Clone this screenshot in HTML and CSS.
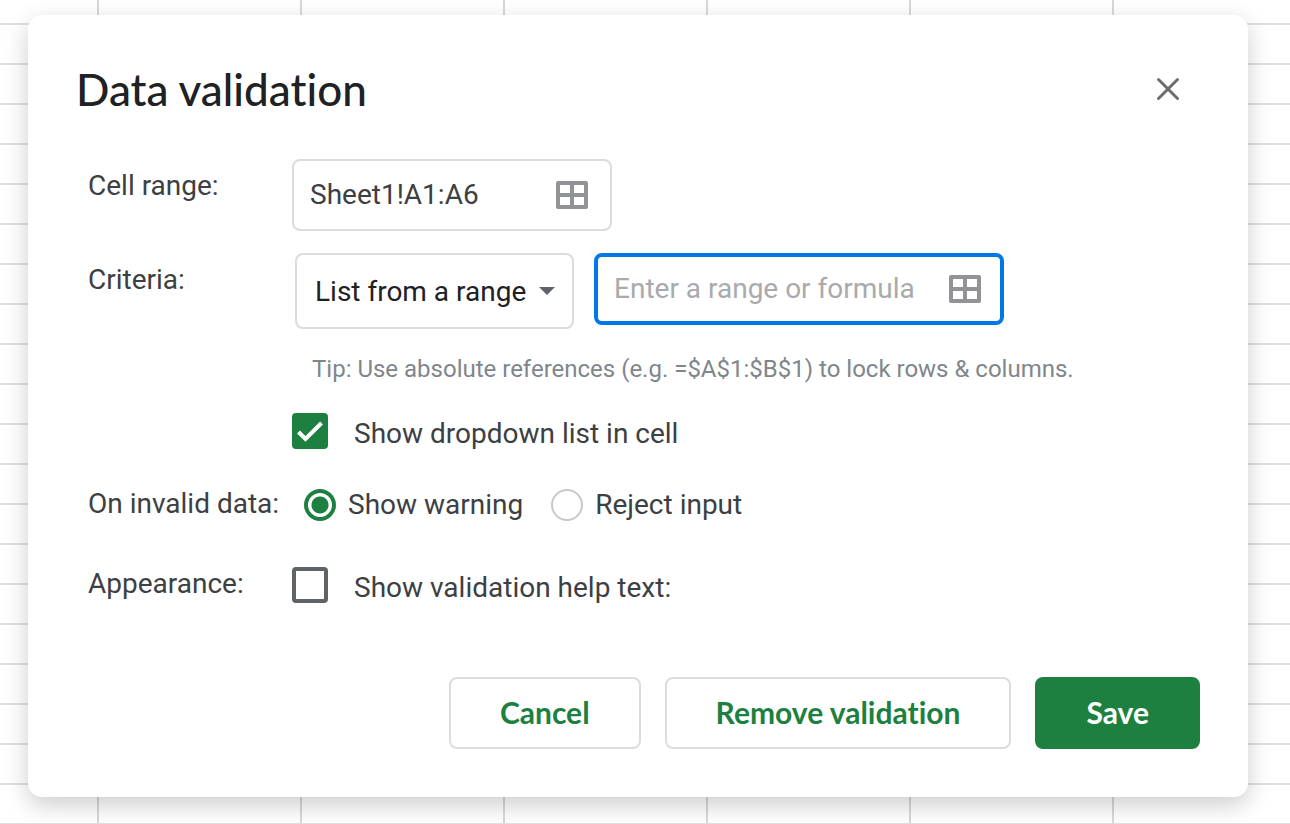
FILE: index.html
```html
<!DOCTYPE html>
<html lang="en">
<head>
    <meta charset="UTF-8">
    <meta name="viewport" content="width=device-width, initial-scale=1.0">
    <title>Data validation</title>
    <link rel="stylesheet" href="styles.css">
</head>
<body>
    <form class="dialog" role="dialog" aria-labelledby="dialog-title">
        <div class="dialog-header">
            <h1 id="dialog-title">Data validation</h1>
            <button type="button" class="close-btn" aria-label="Close">
                <svg width="24" height="24" viewBox="0 0 24 24" fill="none" stroke="#6b6e71" stroke-width="3" stroke-linecap="round">
                    <path d="M2.5 2.5L21.5 21.5M21.5 2.5L2.5 21.5"/>
                </svg>
            </button>
        </div>

        <div class="row range-row">
            <label class="row-label" for="cell-range">Cell range:</label>
            <div class="range-field">
                <input type="text" id="cell-range" value="Sheet1!A1:A6">
                <button type="button" class="grid-btn" aria-label="Select data range">
                    <svg width="32" height="28" viewBox="0 0 32 28" fill="#929396">
                        <path fill-rule="evenodd" d="M2 0H30Q32 0 32 2V26Q32 28 30 28H2Q0 28 0 26V2Q0 0 2 0ZM4 4V12H14V4ZM18 4V12H28V4ZM4 16V24H14V16ZM18 16V24H28V16Z"/>
                    </svg>
                </button>
            </div>
        </div>

        <div class="row criteria-row">
            <label class="row-label" for="criteria">Criteria:</label>
            <div class="row-content">
                <div class="criteria-fields">
                    <div class="select-wrap">
                        <select id="criteria">
                            <option>List from a range</option>
                        </select>
                        <svg class="arrow" width="16" height="8" viewBox="0 0 16 8"><path d="M0 0H16L8 8Z" fill="#5f6368"/></svg>
                    </div>
                    <div class="range-field active">
                        <input type="text" id="criteria-range" placeholder="Enter a range or formula" aria-label="Range or formula">
                        <button type="button" class="grid-btn" aria-label="Select data range">
                            <svg width="32" height="28" viewBox="0 0 32 28" fill="#929396">
                                <path fill-rule="evenodd" d="M2 0H30Q32 0 32 2V26Q32 28 30 28H2Q0 28 0 26V2Q0 0 2 0ZM4 4V12H14V4ZM18 4V12H28V4ZM4 16V24H14V16ZM18 16V24H28V16Z"/>
                            </svg>
                        </button>
                    </div>
                </div>
                <p class="tip">Tip: Use absolute references (e.g. =$A$1:$B$1) to lock rows &amp; columns.</p>
                <div class="option">
                    <input type="checkbox" id="show-dropdown" checked>
                    <label for="show-dropdown">Show dropdown list in cell</label>
                </div>
            </div>
        </div>

        <div class="row" role="radiogroup" aria-labelledby="invalid-label">
            <span class="row-label" id="invalid-label">On invalid data:</span>
            <div class="radios">
                <label class="radio"><input type="radio" name="invalid" checked>Show warning</label>
                <label class="radio"><input type="radio" name="invalid">Reject input</label>
            </div>
        </div>

        <div class="row" role="group" aria-labelledby="appearance-label">
            <span class="row-label" id="appearance-label">Appearance:</span>
            <div class="option">
                <input type="checkbox" id="help-text">
                <label for="help-text">Show validation help text:</label>
            </div>
        </div>

        <div class="buttons">
            <button type="button" class="btn">Cancel</button>
            <button type="button" class="btn">Remove validation</button>
            <button type="button" class="btn btn-save">Save</button>
        </div>
    </form>
</body>
</html>
```
FILE: styles.css
```css
* {
    box-sizing: border-box;
}
body {
    margin: 0;
    padding: 15px 42px 27px 28px;
    font-family: Roboto, "Liberation Sans", sans-serif;
    font-size: 28px;
    line-height: 32px;
    color: #3c4043;
    background-color: #fff;
    /* sheet grid behind the dialog */
    background-image:
        linear-gradient(#e0e0e4 2px, transparent 2px),
        linear-gradient(90deg, #d8d8dc 2px, transparent 2px);
    background-size: 100% 40px, 203px 100%;
    background-position: 0 23px, 97px 0;
}
input, select, button {
    margin: 0;
    font: inherit;
    color: inherit;
}
button {
    cursor: pointer;
}
.dialog {
    padding: 46px 48px 48px;
    border-radius: 14px;
    background: #fff;
    box-shadow: 0 8px 24px rgba(0, 0, 0, 0.2);
}
.dialog-header {
    display: flex;
    align-items: center;
    justify-content: space-between;
    margin-bottom: 42px;
    padding-right: 20px;
}
h1 {
    margin: 0;
    font-family: Lato, sans-serif;
    font-size: 44px;
    line-height: 56px;
    font-weight: 500;
    font-variant-ligatures: none;
    color: #202124;
}
.close-btn, .grid-btn {
    display: flex;
    padding: 0;
    border: none;
    background: none;
}
.row {
    display: flex;
    align-items: flex-start;
    padding-left: 12px;
    margin-bottom: 24px;
}
.row-label {
    flex: 0 0 204px;
    padding-top: 11px;
}
.row-content {
    flex: 1;
}
.range-row {
    margin-bottom: 22px;
}
.range-field {
    display: flex;
    align-items: center;
    width: 320px;
    height: 72px;
    padding: 0 22px 0 16px;
    border: 2px solid #dadce0;
    border-radius: 8px;
}
.range-field input {
    flex: 1;
    min-width: 0;
    padding: 0;
    border: none;
    outline: none;
    background: none;
}
.range-field input::placeholder {
    color: #a8aaac;
    opacity: 1;
}
.range-field.active {
    width: 410px;
    padding: 0 19px 0 16px;
    border: 4px solid #0078e7;
}
.criteria-row {
    margin-bottom: 18px;
}
.criteria-fields {
    display: flex;
    gap: 20px;
    padding-left: 3px;
}
.select-wrap {
    position: relative;
    width: 279px;
}
select {
    appearance: none;
    width: 100%;
    height: 76px;
    padding: 2px 40px 0 18px;
    border: 2px solid #dadce0;
    border-radius: 8px;
    background: #fff;
    color: #202124;
}
.arrow {
    position: absolute;
    right: 19px;
    top: 34px;
    pointer-events: none;
}
.tip {
    margin: 24px 0 18px;
    padding-left: 20px;
    font-size: 24px;
    color: #80868b;
}
.option {
    display: flex;
    align-items: center;
    gap: 26px;
    height: 56px;
}
.option label {
    padding-top: 6px;
}
input[type="checkbox"] {
    appearance: none;
    width: 36px;
    height: 36px;
    border: 4px solid #5f6368;
    border-radius: 4px;
}
input[type="checkbox"]:checked {
    border: none;
    background: #1e8040 url("data:image/svg+xml,%3Csvg xmlns='http://www.w3.org/2000/svg' viewBox='0 0 36 36'%3E%3Cpath d='M6.5 19L13.5 26L29.5 10' fill='none' stroke='white' stroke-width='4'/%3E%3C/svg%3E");
}
.radios {
    display: flex;
    align-items: center;
    gap: 28px;
    height: 56px;
    padding-left: 12px;
}
.radio {
    display: flex;
    align-items: center;
    gap: 12px;
}
input[type="radio"] {
    appearance: none;
    width: 32px;
    height: 32px;
    border: 2px solid #c6c8ca;
    border-radius: 50%;
}
input[type="radio"]:checked {
    border: 4px solid #1e8040;
    background: radial-gradient(circle, #1e8040 8px, #fff 9px);
}
.buttons {
    display: flex;
    justify-content: flex-end;
    gap: 24px;
    margin-top: 64px;
}
.btn {
    height: 72px;
    padding: 0 49px 2px;
    border: 2px solid #dadce0;
    border-radius: 8px;
    background: #fff;
    color: #1e8040;
    font-family: Lato, sans-serif;
    font-size: 30px;
    font-weight: 700;
    font-variant-ligatures: none;
}
.btn-save {
    border-color: #1e8040;
    background: #1e8040;
    color: #fff;
}
```
